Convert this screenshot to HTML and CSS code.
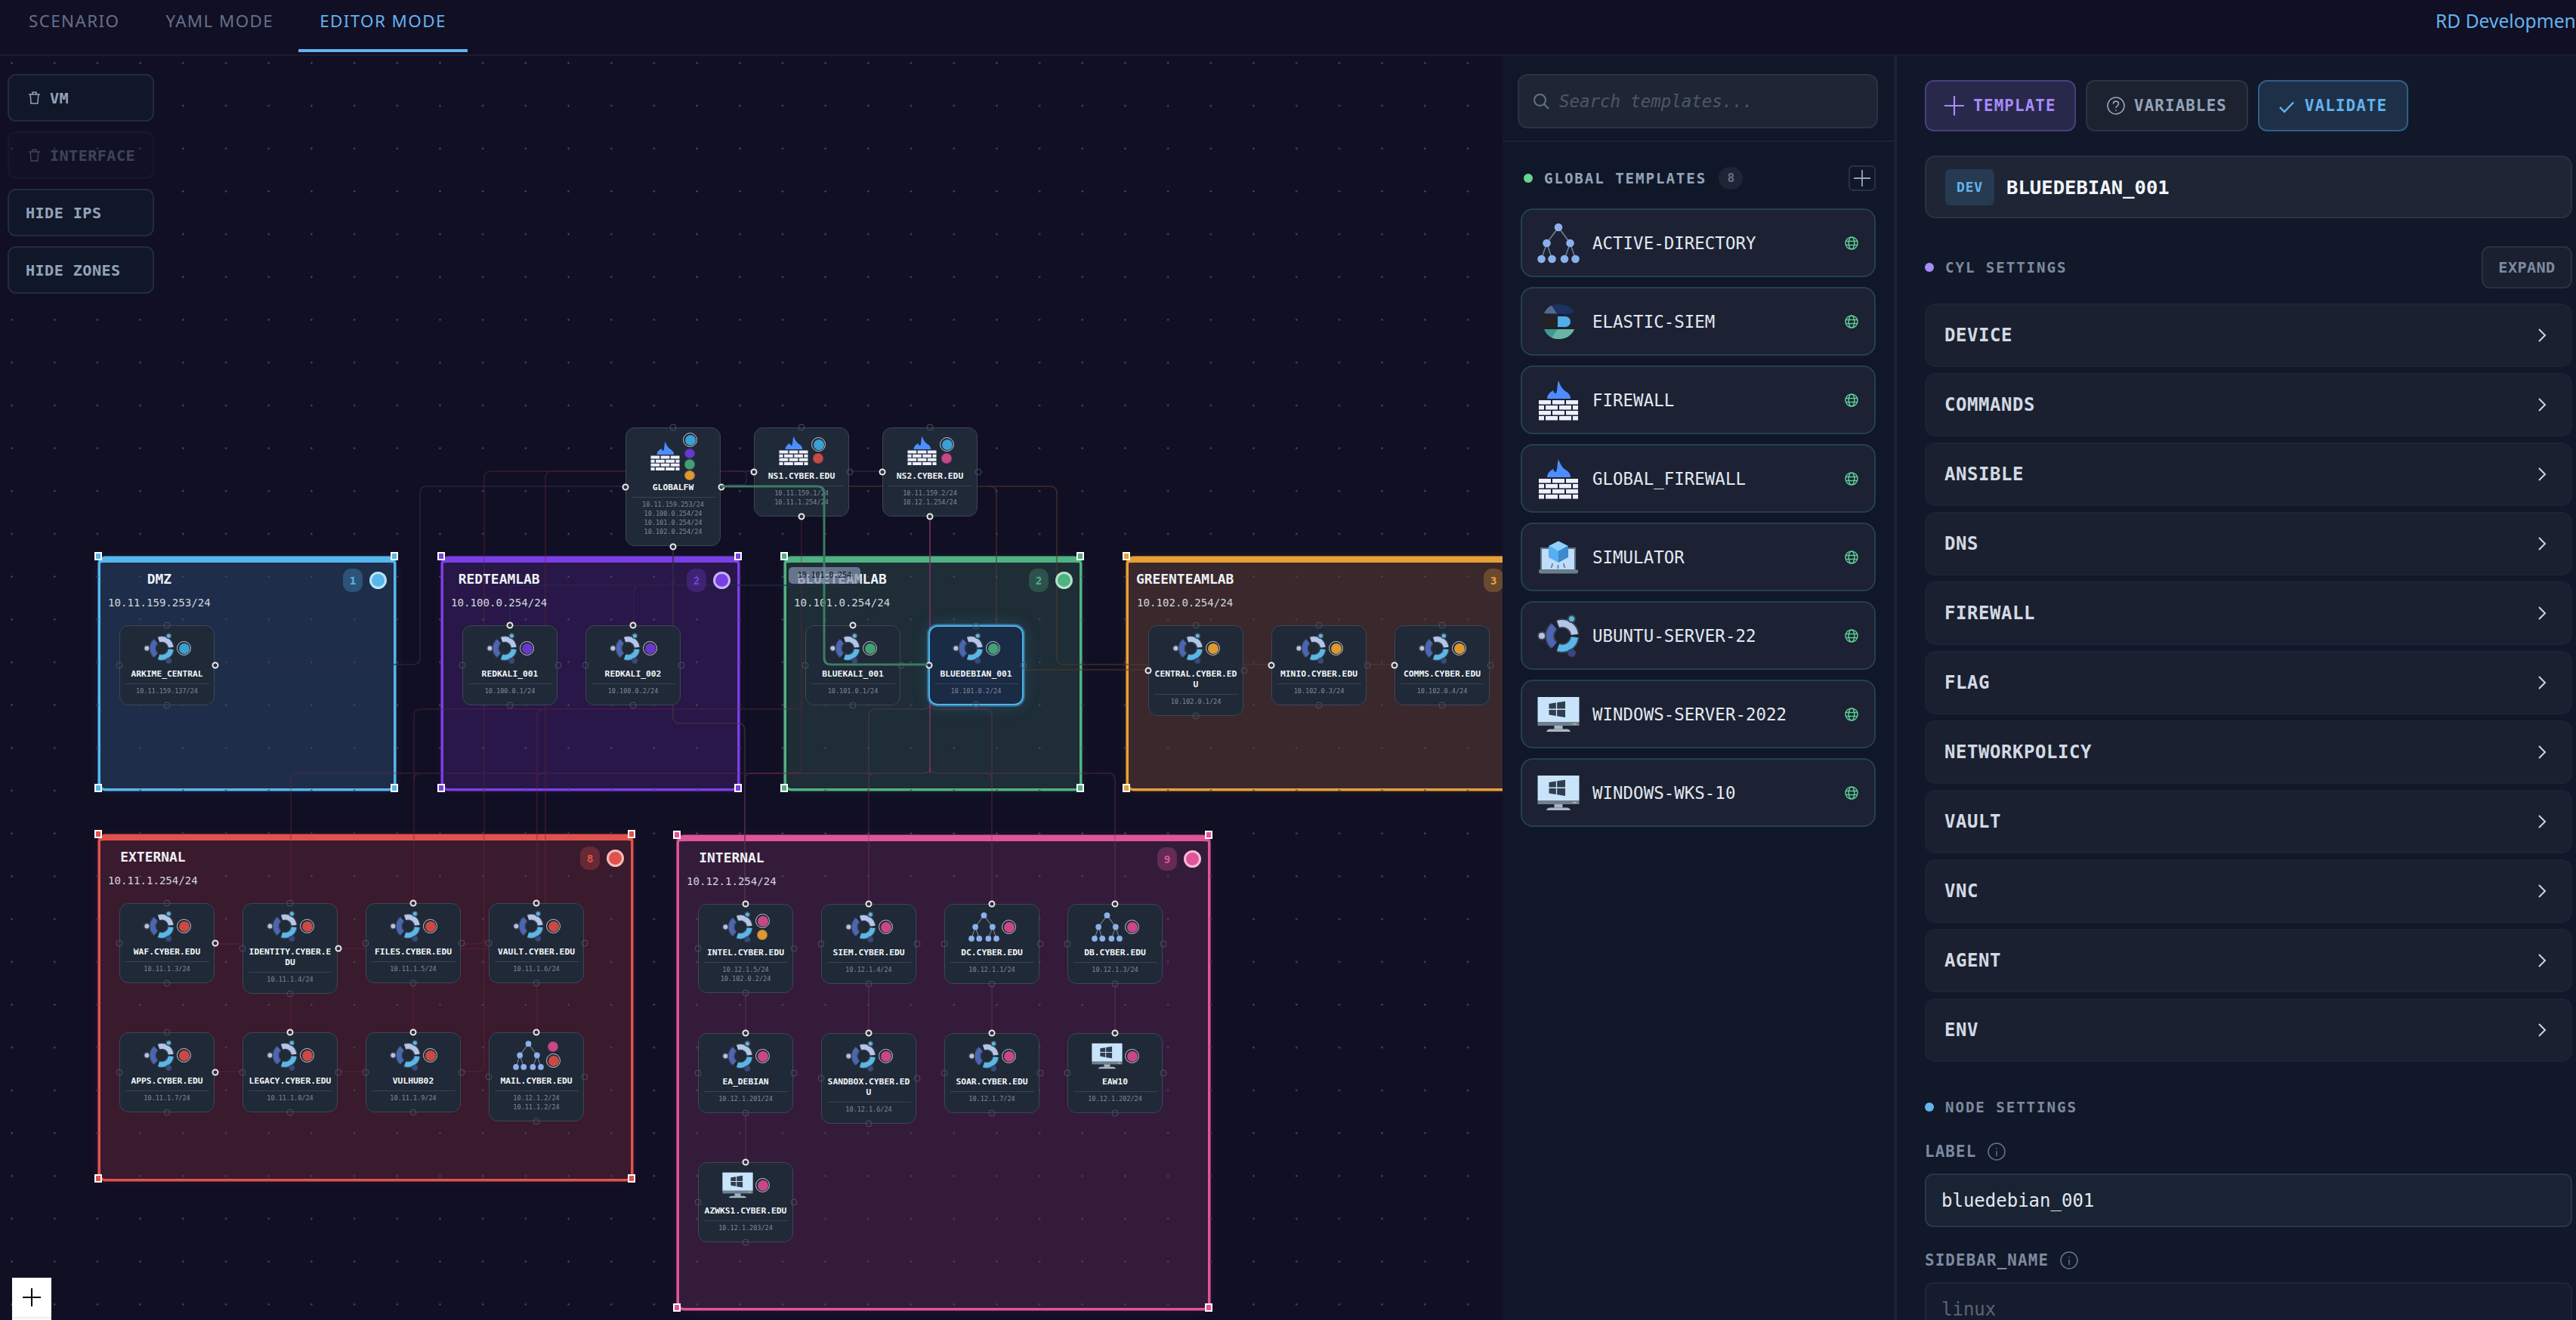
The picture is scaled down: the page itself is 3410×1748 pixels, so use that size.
FILE: index.html
```html
<!DOCTYPE html>
<html lang="en">
<head>
<meta charset="utf-8">
<title>Editor Mode</title>
<link rel="stylesheet" href="styles.css">
</head>
<body>
<svg class="defs" width="0" height="0" aria-hidden="true">
  <symbol id="ubuntu" viewBox="0 0 56 56">
    <g fill="none" stroke="#3f4654" stroke-width="12.500">
      <path d="M22.400 40.600A16.500 16.500 0 0 1 22.400 15.400"/><path d="M27.400 12.500A16.500 16.500 0 0 1 49.400 26.300"/><path d="M49.400 29.700A16.500 16.500 0 0 1 27.400 43.500"/>
    </g>
    <g fill="none" stroke-width="9">
      <path stroke="#4a66b5" d="M22.400 40.600A16.500 16.500 0 0 1 22.400 15.400"/><path stroke="#b3c6ea" d="M27.400 12.500A16.500 16.500 0 0 1 49.400 26.300"/><path stroke="#58b8e8" d="M49.400 29.700A16.500 16.500 0 0 1 27.400 43.500"/>
    </g>
    <g stroke="#3f4654" stroke-width="2">
      <circle cx="6" cy="28" r="5" fill="#b8c2e0"/><circle cx="45.500" cy="5.500" r="4.500" fill="#58b8e0"/><circle cx="45.500" cy="50.500" r="4.500" fill="#2d4aa0"/>
    </g>
  </symbol>
  <symbol id="firewall" viewBox="0 0 56 56">
    <path fill="#4d8dff" d="M13 26C13 20 18 17 21 15C22 18 23 19 25 19C27 14 26 8 28 2C30 8 33 13 37 16C41 18 44 21 44 26Z"/>
    <g fill="#eef0ff">
      <path d="M2 28h16v5.500H2zM20 28h16v5.500H20zM38 28h16v5.500H38z"/>
      <path d="M2 35h7v5.500H2zM11 35h16v5.500H11zM29 35h16v5.500H29zM47 35h7v5.500H47z"/>
      <path d="M2 42h16v5.500H2zM20 42h16v5.500H20zM38 42h16v5.500H38z"/>
      <path d="M2 49h7v5.500H2zM11 49h16v5.500H11zM29 49h16v5.500H29zM47 49h7v5.500H47z"/>
    </g>
  </symbol>
  <symbol id="ad" viewBox="0 0 56 56">
    <g stroke="#7a8698" stroke-width="1.400" fill="none">
      <path d="M28 7L12.500 28M28 7L43.500 28M12.500 28L5.500 49M12.500 28L19.500 49M43.500 28L36 49M43.500 28L50.500 49"/>
    </g>
    <g fill="#8ab0ec">
      <circle cx="28" cy="7" r="5.300"/><circle cx="12.500" cy="28" r="5.300"/><circle cx="43.500" cy="28" r="5.300"/>
      <circle cx="5.500" cy="49" r="5.300"/><circle cx="19.500" cy="49" r="5.300"/><circle cx="36" cy="49" r="5.300"/><circle cx="50.500" cy="49" r="5.300"/>
    </g>
  </symbol>
  <symbol id="elastic" viewBox="0 0 56 56">
    <path fill="#1e3163" d="M9 17C12 9 20 5 28 5C38 5 45 9 49 14C47 16 45 17.500 42 17.500Z"/>
    <path fill="#55698f" d="M9 17C11 12 15 8 19 6.500L26 17.500Z"/>
    <path fill="#232326" d="M9 21H27V35H9Q6 35 6 32V24Q6 21 9 21Z"/>
    <path fill="#52aee8" d="M27 21H37A7 7 0 0 1 37 35H27Z"/>
    <path fill="#3c9a8e" d="M9 38H49C45 47 37 51 28 51C19 51 12 46 9 38Z"/>
    <path fill="#6ab5a8" d="M27 38H49C45 47 37 51 28 51C25 51 22 50 19 49Z"/>
  </symbol>
  <symbol id="simulator" viewBox="0 0 56 56">
    <rect x="5" y="16" width="45" height="29" fill="#c0dcf8" stroke="#5e7280" stroke-width="2"/>
    <path fill="#6a7e8c" d="M2 44.500H54V47Q54 49.500 52 49.500H4Q2 49.500 2 47Z"/>
    <path fill="#8fd0ff" d="M28 6.500L41 13L28 19.500L15 13Z"/>
    <path fill="#55b0f0" d="M15 13L28 19.500V35L15 28Z"/>
    <path fill="#3f88cc" d="M41 13L28 19.500V35L41 28Z"/>
    <path fill="none" stroke="#5e7aa8" stroke-width="1.600" d="M20 36Q20 40 18 42M27.500 38V43M35 36Q35 40 37 42"/>
  </symbol>
  <symbol id="windows" viewBox="0 0 56 56">
    <rect x="0.500" y="5" width="55" height="33" fill="#c8e4fb"/>
    <rect x="0.500" y="38" width="55" height="5" fill="#6f7f90"/>
    <rect x="47" y="40" width="5" height="1.300" fill="#e0c060"/>
    <rect x="22.500" y="43" width="11" height="4.500" fill="#a9b6c3"/>
    <path fill="#a9b6c3" d="M12 51Q13 47.500 17 47.500H39Q43 47.500 44 51Z"/>
    <path fill="#2f3d4d" d="M15.500 14L24.800 12.500V20.500H15.500ZM26.200 12.300L37 10.700V20.500H26.200ZM15.500 22H24.800V30L15.500 28.500ZM26.200 22H37V32L26.200 30.300Z"/>
  </symbol>
  <symbol id="globe" viewBox="0 0 18 18">
    <g fill="none" stroke="#5fcb95" stroke-width="1.500"><circle cx="9" cy="9" r="8"/><ellipse cx="9" cy="9" rx="3.800" ry="8"/><path d="M1.500 6.500H16.500M1.500 11.500H16.500"/></g>
  </symbol>
  <symbol id="trash" viewBox="0 0 15 17">
    <g fill="none" stroke="currentColor" stroke-width="1.500"><path d="M0 4H15M2.200 4L3 16H12L12.800 4M5 4V1.200H10V4"/></g>
  </symbol>
  <symbol id="chev" viewBox="0 0 12 20">
    <path fill="none" stroke="#cbd5e1" stroke-width="2" d="M2 2L10 10L2 18"/>
  </symbol>
  <symbol id="info" viewBox="0 0 24 24">
    <g fill="none" stroke="#64748b" stroke-width="1.500"><circle cx="12" cy="12" r="11"/><path d="M12 11V18M12 7V8.500"/></g>
  </symbol>
  <symbol id="plus" viewBox="0 0 26 26">
    <path fill="none" stroke="currentColor" stroke-width="2.200" d="M13 0V26M0 13H26"/>
  </symbol>
</svg>

<div class="app">
  <header class="topbar">
    <nav class="tabs">
      <a class="tab">SCENARIO</a>
      <a class="tab">YAML MODE</a>
      <a class="tab tab-active">EDITOR MODE</a>
    </nav>
    <span class="org">RD Development</span>
  </header>

  <main class="main">
    <section class="canvas">
      <div class="toolbar">
        <button class="tool"><svg class="tool-ico"><use href="#trash"/></svg>VM</button>
        <button class="tool tool-off"><svg class="tool-ico"><use href="#trash"/></svg>INTERFACE</button>
        <button class="tool">HIDE IPS</button>
        <button class="tool">HIDE ZONES</button>
      </div>

      <!-- zones -->
      <div class="zone z-dmz c-blue">
        <i class="zh tl"></i><i class="zh tr"></i><i class="zh bl"></i><i class="zh br"></i>
        <div class="zhead"><div class="ztitle"><div class="zname">DMZ</div><div class="zip">10.11.159.253/24</div></div><div class="zmeta"><span class="zcount">1</span><span class="zdot"></span></div></div>
        <div class="zgrid">
          <div class="node"><i class="h t"></i><i class="h r on"></i><i class="h b"></i><i class="h l"></i><div class="nhead"><svg class="nicon"><use href="#ubuntu"/></svg><div class="rings"><b class="ring c-blue"></b></div></div><div class="nlabel">ARKIME_CENTRAL</div><div class="nips"><div>10.11.159.137/24</div></div></div>
        </div>
      </div>

      <div class="zone z-red c-purple">
        <i class="zh tl"></i><i class="zh tr"></i><i class="zh bl"></i><i class="zh br"></i>
        <div class="zhead"><div class="ztitle"><div class="zname">REDTEAMLAB</div><div class="zip">10.100.0.254/24</div></div><div class="zmeta"><span class="zcount">2</span><span class="zdot"></span></div></div>
        <div class="zgrid">
          <div class="node"><i class="h t on"></i><i class="h r"></i><i class="h b"></i><i class="h l"></i><div class="nhead"><svg class="nicon"><use href="#ubuntu"/></svg><div class="rings"><b class="ring c-purple"></b></div></div><div class="nlabel">REDKALI_001</div><div class="nips"><div>10.100.0.1/24</div></div></div>
          <div class="node"><i class="h t on"></i><i class="h r"></i><i class="h b"></i><i class="h l"></i><div class="nhead"><svg class="nicon"><use href="#ubuntu"/></svg><div class="rings"><b class="ring c-purple"></b></div></div><div class="nlabel">REDKALI_002</div><div class="nips"><div>10.100.0.2/24</div></div></div>
        </div>
      </div>

      <div class="zone z-blue c-green">
        <i class="zh tl"></i><i class="zh tr"></i><i class="zh bl"></i><i class="zh br"></i>
        <div class="tip">10.101.0.254</div>
        <div class="zhead"><div class="ztitle"><div class="zname">BLUETEAMLAB</div><div class="zip">10.101.0.254/24</div></div><div class="zmeta"><span class="zcount">2</span><span class="zdot"></span></div></div>
        <div class="zgrid">
          <div class="node"><i class="h t on"></i><i class="h r"></i><i class="h b"></i><i class="h l"></i><div class="nhead"><svg class="nicon"><use href="#ubuntu"/></svg><div class="rings"><b class="ring c-green"></b></div></div><div class="nlabel">BLUEKALI_001</div><div class="nips"><div>10.101.0.1/24</div></div></div>
          <div class="node node-sel"><i class="h t"></i><i class="h r"></i><i class="h b"></i><i class="h l on"></i><div class="nhead"><svg class="nicon"><use href="#ubuntu"/></svg><div class="rings"><b class="ring c-green"></b></div></div><div class="nlabel">BLUEDEBIAN_001</div><div class="nips"><div>10.101.0.2/24</div></div></div>
        </div>
      </div>

      <div class="zone z-green c-orange">
        <i class="zh tl"></i><i class="zh bl"></i>
        <div class="zhead"><div class="ztitle"><div class="zname">GREENTEAMLAB</div><div class="zip">10.102.0.254/24</div></div><div class="zmeta"><span class="zcount">3</span><span class="zdot"></span></div></div>
        <div class="zgrid">
          <div class="node"><i class="h t"></i><i class="h r"></i><i class="h b"></i><i class="h l on"></i><div class="nhead"><svg class="nicon"><use href="#ubuntu"/></svg><div class="rings"><b class="ring c-orange"></b></div></div><div class="nlabel">CENTRAL.CYBER.EDU</div><div class="nips"><div>10.102.0.1/24</div></div></div>
          <div class="node"><i class="h t"></i><i class="h r"></i><i class="h b"></i><i class="h l on"></i><div class="nhead"><svg class="nicon"><use href="#ubuntu"/></svg><div class="rings"><b class="ring c-orange"></b></div></div><div class="nlabel">MINIO.CYBER.EDU</div><div class="nips"><div>10.102.0.3/24</div></div></div>
          <div class="node"><i class="h t"></i><i class="h r"></i><i class="h b"></i><i class="h l on"></i><div class="nhead"><svg class="nicon"><use href="#ubuntu"/></svg><div class="rings"><b class="ring c-orange"></b></div></div><div class="nlabel">COMMS.CYBER.EDU</div><div class="nips"><div>10.102.0.4/24</div></div></div>
        </div>
      </div>

      <div class="zone z-ext c-red">
        <i class="zh tl"></i><i class="zh tr"></i><i class="zh bl"></i><i class="zh br"></i>
        <div class="zhead"><div class="ztitle"><div class="zname">EXTERNAL</div><div class="zip">10.11.1.254/24</div></div><div class="zmeta"><span class="zcount">8</span><span class="zdot"></span></div></div>
        <div class="zgrid">
          <div class="node"><i class="h t"></i><i class="h r on"></i><i class="h b"></i><i class="h l"></i><div class="nhead"><svg class="nicon"><use href="#ubuntu"/></svg><div class="rings"><b class="ring c-red"></b></div></div><div class="nlabel">WAF.CYBER.EDU</div><div class="nips"><div>10.11.1.3/24</div></div></div>
          <div class="node"><i class="h t"></i><i class="h r on"></i><i class="h b"></i><i class="h l"></i><div class="nhead"><svg class="nicon"><use href="#ubuntu"/></svg><div class="rings"><b class="ring c-red"></b></div></div><div class="nlabel">IDENTITY.CYBER.EDU</div><div class="nips"><div>10.11.1.4/24</div></div></div>
          <div class="node"><i class="h t on"></i><i class="h r"></i><i class="h b"></i><i class="h l"></i><div class="nhead"><svg class="nicon"><use href="#ubuntu"/></svg><div class="rings"><b class="ring c-red"></b></div></div><div class="nlabel">FILES.CYBER.EDU</div><div class="nips"><div>10.11.1.5/24</div></div></div>
          <div class="node"><i class="h t on"></i><i class="h r"></i><i class="h b"></i><i class="h l"></i><div class="nhead"><svg class="nicon"><use href="#ubuntu"/></svg><div class="rings"><b class="ring c-red"></b></div></div><div class="nlabel">VAULT.CYBER.EDU</div><div class="nips"><div>10.11.1.6/24</div></div></div>
          <div class="node"><i class="h t"></i><i class="h r on"></i><i class="h b"></i><i class="h l"></i><div class="nhead"><svg class="nicon"><use href="#ubuntu"/></svg><div class="rings"><b class="ring c-red"></b></div></div><div class="nlabel">APPS.CYBER.EDU</div><div class="nips"><div>10.11.1.7/24</div></div></div>
          <div class="node"><i class="h t on"></i><i class="h r"></i><i class="h b"></i><i class="h l"></i><div class="nhead"><svg class="nicon"><use href="#ubuntu"/></svg><div class="rings"><b class="ring c-red"></b></div></div><div class="nlabel">LEGACY.CYBER.EDU</div><div class="nips"><div>10.11.1.8/24</div></div></div>
          <div class="node"><i class="h t on"></i><i class="h r"></i><i class="h b"></i><i class="h l"></i><div class="nhead"><svg class="nicon"><use href="#ubuntu"/></svg><div class="rings"><b class="ring c-red"></b></div></div><div class="nlabel">VULHUB02</div><div class="nips"><div>10.11.1.9/24</div></div></div>
          <div class="node"><i class="h t on"></i><i class="h r"></i><i class="h b"></i><i class="h l"></i><div class="nhead"><svg class="nicon"><use href="#ad"/></svg><div class="rings"><b class="pip c-pink"></b><b class="ring c-red"></b></div></div><div class="nlabel">MAIL.CYBER.EDU</div><div class="nips"><div>10.12.1.2/24</div><div>10.11.1.2/24</div></div></div>
        </div>
      </div>

      <div class="zone z-int c-pink">
        <i class="zh tl"></i><i class="zh tr"></i><i class="zh bl"></i><i class="zh br"></i>
        <div class="zhead"><div class="ztitle"><div class="zname">INTERNAL</div><div class="zip">10.12.1.254/24</div></div><div class="zmeta"><span class="zcount">9</span><span class="zdot"></span></div></div>
        <div class="zgrid">
          <div class="node"><i class="h t on"></i><i class="h r"></i><i class="h b"></i><i class="h l"></i><div class="nhead"><svg class="nicon"><use href="#ubuntu"/></svg><div class="rings"><b class="ring c-pink"></b><b class="pip c-orange"></b></div></div><div class="nlabel">INTEL.CYBER.EDU</div><div class="nips"><div>10.12.1.5/24</div><div>10.102.0.2/24</div></div></div>
          <div class="node"><i class="h t on"></i><i class="h r"></i><i class="h b"></i><i class="h l"></i><div class="nhead"><svg class="nicon"><use href="#ubuntu"/></svg><div class="rings"><b class="ring c-pink"></b></div></div><div class="nlabel">SIEM.CYBER.EDU</div><div class="nips"><div>10.12.1.4/24</div></div></div>
          <div class="node"><i class="h t on"></i><i class="h r"></i><i class="h b"></i><i class="h l"></i><div class="nhead"><svg class="nicon"><use href="#ad"/></svg><div class="rings"><b class="ring c-pink"></b></div></div><div class="nlabel">DC.CYBER.EDU</div><div class="nips"><div>10.12.1.1/24</div></div></div>
          <div class="node"><i class="h t on"></i><i class="h r"></i><i class="h b"></i><i class="h l"></i><div class="nhead"><svg class="nicon"><use href="#ad"/></svg><div class="rings"><b class="ring c-pink"></b></div></div><div class="nlabel">DB.CYBER.EDU</div><div class="nips"><div>10.12.1.3/24</div></div></div>
          <div class="node"><i class="h t on"></i><i class="h r"></i><i class="h b"></i><i class="h l"></i><div class="nhead"><svg class="nicon"><use href="#ubuntu"/></svg><div class="rings"><b class="ring c-pink"></b></div></div><div class="nlabel">EA_DEBIAN</div><div class="nips"><div>10.12.1.201/24</div></div></div>
          <div class="node"><i class="h t on"></i><i class="h r"></i><i class="h b"></i><i class="h l"></i><div class="nhead"><svg class="nicon"><use href="#ubuntu"/></svg><div class="rings"><b class="ring c-pink"></b></div></div><div class="nlabel">SANDBOX.CYBER.EDU</div><div class="nips"><div>10.12.1.6/24</div></div></div>
          <div class="node"><i class="h t on"></i><i class="h r"></i><i class="h b"></i><i class="h l"></i><div class="nhead"><svg class="nicon"><use href="#ubuntu"/></svg><div class="rings"><b class="ring c-pink"></b></div></div><div class="nlabel">SOAR.CYBER.EDU</div><div class="nips"><div>10.12.1.7/24</div></div></div>
          <div class="node"><i class="h t on"></i><i class="h r"></i><i class="h b"></i><i class="h l"></i><div class="nhead"><svg class="nicon"><use href="#windows"/></svg><div class="rings"><b class="ring c-pink"></b></div></div><div class="nlabel">EAW10</div><div class="nips"><div>10.12.1.202/24</div></div></div>
          <div class="node"><i class="h t on"></i><i class="h r"></i><i class="h b"></i><i class="h l"></i><div class="nhead"><svg class="nicon"><use href="#windows"/></svg><div class="rings"><b class="ring c-pink"></b></div></div><div class="nlabel">AZWKS1.CYBER.EDU</div><div class="nips"><div>10.12.1.203/24</div></div></div>
        </div>
      </div>

      <div class="dots"></div>

      <svg class="edges" viewBox="0 74 1989 1674">
        <g class="e-red">
          <path d="M998 624H650Q641 624 641 633V1241Q641 1250 632 1250H611"/>
          <path d="M641 1241V1410Q641 1419 632 1419H611"/>
          <path d="M998 624H731Q722 624 722 633V1197"/>
          <path d="M1061 683V930Q1061 939 1052 939H557Q548 939 548 948V1197"/>
          <path d="M720 939Q711 939 711 948V1197"/>
          <path d="M1061 930V1015Q1061 1024 1052 1024H394Q385 1024 385 1033V1197"/>
          <path d="M720 1024Q711 1024 711 1033M557 1024Q548 1024 548 1033"/>
          <path d="M284 1250H321M447 1256H648M284 1419H321M447 1419H484M385 1316V1367M547 1302V1367M711 1302V1367"/>
        </g>
        <g class="e-pink">
          <path d="M1231 930Q1231 939 1222 939H1159Q1150 939 1150 948V1197"/>
          <path d="M1231 930Q1231 939 1240 939H1304Q1313 939 1313 948V1197"/>
          <path d="M1231 1015Q1231 1024 1222 1024H995Q986 1024 986 1033V1197"/>
          <path d="M1231 1015Q1231 1024 1240 1024H1467Q1476 1024 1476 1033V1197"/>
          <path d="M1159 1024Q1150 1024 1150 1033M1304 1024Q1313 1024 1313 1033"/>
          <path d="M987 1314V1368M1150 1302V1368M1313 1302V1368M1476 1302V1368M987 1473V1539"/>
        </g>
        <path class="e-trunk" d="M1231 683V1024"/>
        <path class="e-mauve" d="M891 721V949Q891 958 900 958H977Q986 958 986 967V1197"/>
        <g class="e-blue">
          <path d="M284 880H547Q556 880 556 871V653Q556 644 565 644H828"/>
          <path d="M891 721V766Q891 775 882 775H848Q839 775 839 784V828"/>
          <path d="M848 775H684Q675 775 675 784V828"/>
          <path d="M891 766Q891 775 900 775H1119Q1128 775 1128 784V828"/>
          <path d="M1125 624H1168"/>
          <path d="M965 624H982Q988 624 988 630V636Q988 642 982 642H965"/>
        </g>
        <g class="e-brown">
          <path d="M954 644H1390Q1399 644 1399 653V871Q1399 880 1408 880H1846"/>
          <path d="M1310 644Q1319 644 1319 653V828"/>
          <path d="M1355 887H1520"/>
        </g>
      </svg>
      <svg class="edges edges-top" viewBox="0 74 1989 1674">
        <path class="e-green" d="M954 644H1082Q1091 644 1091 653V871Q1091 880 1100 880H1228"/>
      </svg>

      <!-- nodes outside zones -->
      <div class="node gn g-fw"><i class="h t"></i><i class="h r on"></i><i class="h b on"></i><i class="h l on"></i><div class="nhead"><svg class="nicon"><use href="#firewall"/></svg><div class="rings"><b class="ring c-blue"></b><b class="pip c-purple"></b><b class="pip c-green"></b><b class="pip c-orange"></b></div></div><div class="nlabel">GLOBALFW</div><div class="nips"><div>10.11.159.253/24</div><div>10.100.0.254/24</div><div>10.101.0.254/24</div><div>10.102.0.254/24</div></div></div>
      <div class="node gn g-ns1"><i class="h t"></i><i class="h r"></i><i class="h b on"></i><i class="h l on"></i><div class="nhead"><svg class="nicon"><use href="#firewall"/></svg><div class="rings"><b class="ring c-blue"></b><b class="pip c-red"></b></div></div><div class="nlabel">NS1.CYBER.EDU</div><div class="nips"><div>10.11.159.1/24</div><div>10.11.1.254/24</div></div></div>
      <div class="node gn g-ns2"><i class="h t"></i><i class="h r"></i><i class="h b on"></i><i class="h l on"></i><div class="nhead"><svg class="nicon"><use href="#firewall"/></svg><div class="rings"><b class="ring c-blue"></b><b class="pip c-pink"></b></div></div><div class="nlabel">NS2.CYBER.EDU</div><div class="nips"><div>10.11.159.2/24</div><div>10.12.1.254/24</div></div></div>

      <button class="zoomctl"><svg class="zoomctl-ico"><use href="#plus"/></svg></button>
    </section>

    <aside class="templates">
      <div class="search-wrap">
        <div class="search">
          <svg class="search-ico" viewBox="0 0 22 22"><g fill="none" stroke="#64748b" stroke-width="2"><circle cx="9.500" cy="9.500" r="7.500"/><path d="M15 15L21 21"/></g></svg>
          <span class="search-ph">Search templates...</span>
        </div>
      </div>
      <div class="tpl-head">
        <span class="dot dot-green"></span>
        <span class="sect-title">GLOBAL TEMPLATES</span>
        <span class="tpl-count">8</span>
        <button class="tpl-add"><svg class="tpl-add-ico"><use href="#plus"/></svg></button>
      </div>
      <div class="tpl-list">
        <div class="tpl"><svg class="tpl-ico"><use href="#ad"/></svg><span class="tpl-name">ACTIVE-DIRECTORY</span><svg class="tpl-globe"><use href="#globe"/></svg></div>
        <div class="tpl"><svg class="tpl-ico"><use href="#elastic"/></svg><span class="tpl-name">ELASTIC-SIEM</span><svg class="tpl-globe"><use href="#globe"/></svg></div>
        <div class="tpl"><svg class="tpl-ico"><use href="#firewall"/></svg><span class="tpl-name">FIREWALL</span><svg class="tpl-globe"><use href="#globe"/></svg></div>
        <div class="tpl"><svg class="tpl-ico"><use href="#firewall"/></svg><span class="tpl-name">GLOBAL_FIREWALL</span><svg class="tpl-globe"><use href="#globe"/></svg></div>
        <div class="tpl"><svg class="tpl-ico"><use href="#simulator"/></svg><span class="tpl-name">SIMULATOR</span><svg class="tpl-globe"><use href="#globe"/></svg></div>
        <div class="tpl"><svg class="tpl-ico"><use href="#ubuntu"/></svg><span class="tpl-name">UBUNTU-SERVER-22</span><svg class="tpl-globe"><use href="#globe"/></svg></div>
        <div class="tpl"><svg class="tpl-ico"><use href="#windows"/></svg><span class="tpl-name">WINDOWS-SERVER-2022</span><svg class="tpl-globe"><use href="#globe"/></svg></div>
        <div class="tpl"><svg class="tpl-ico"><use href="#windows"/></svg><span class="tpl-name">WINDOWS-WKS-10</span><svg class="tpl-globe"><use href="#globe"/></svg></div>
      </div>
    </aside>

    <aside class="inspector">
      <div class="actions">
        <button class="act act-purple"><svg class="act-plus"><use href="#plus"/></svg>TEMPLATE</button>
        <button class="act act-grey"><svg class="act-ico" viewBox="0 0 24 24"><g fill="none" stroke="currentColor" stroke-width="1.600"><circle cx="12" cy="12" r="11"/><path d="M8.500 9.500C8.500 5 15.500 5 15.500 9.500C15.500 12 12 12.500 12 15M12 17.500V19"/></g></svg>VARIABLES</button>
        <button class="act act-blue"><svg class="act-check" viewBox="0 0 20 16"><path fill="none" stroke="currentColor" stroke-width="2.400" d="M1 8L7 14L19 1.500"/></svg>VALIDATE</button>
      </div>
      <div class="devhead"><span class="devtag">DEV</span><span class="devname">BLUEDEBIAN_001</span></div>
      <div class="sect sect-cyl">
        <span class="dot dot-purple"></span><span class="sect-title sect-dim">CYL SETTINGS</span>
        <button class="expand">EXPAND</button>
      </div>
      <div class="rows">
        <div class="row"><span>DEVICE</span><svg class="chev"><use href="#chev"/></svg></div>
        <div class="row"><span>COMMANDS</span><svg class="chev"><use href="#chev"/></svg></div>
        <div class="row"><span>ANSIBLE</span><svg class="chev"><use href="#chev"/></svg></div>
        <div class="row"><span>DNS</span><svg class="chev"><use href="#chev"/></svg></div>
        <div class="row"><span>FIREWALL</span><svg class="chev"><use href="#chev"/></svg></div>
        <div class="row"><span>FLAG</span><svg class="chev"><use href="#chev"/></svg></div>
        <div class="row"><span>NETWORKPOLICY</span><svg class="chev"><use href="#chev"/></svg></div>
        <div class="row"><span>VAULT</span><svg class="chev"><use href="#chev"/></svg></div>
        <div class="row"><span>VNC</span><svg class="chev"><use href="#chev"/></svg></div>
        <div class="row"><span>AGENT</span><svg class="chev"><use href="#chev"/></svg></div>
        <div class="row"><span>ENV</span><svg class="chev"><use href="#chev"/></svg></div>
      </div>
      <div class="sect sect-node">
        <span class="dot dot-sky"></span><span class="sect-title sect-dim">NODE SETTINGS</span>
      </div>
      <div class="field-label">LABEL<svg class="info"><use href="#info"/></svg></div>
      <div class="field">bluedebian_001</div>
      <div class="field-label field-label-2">SIDEBAR_NAME<svg class="info"><use href="#info"/></svg></div>
      <div class="field field-ph">linux</div>
    </aside>
  </main>
</div>
</body>
</html>
```
FILE: styles.css
```css
* { box-sizing: border-box; }
html, body { margin: 0; height: 100%; }
body { background: #110f24; overflow: hidden; font-family: "DejaVu Sans Mono", monospace; }
button { font-family: inherit; cursor: pointer; }
.defs { position: absolute; }

.app { display: flex; flex-direction: column; width: 3410px; height: 1748px; overflow: hidden; }

/* top bar */
.topbar { flex: none; height: 74px; display: flex; justify-content: space-between; background: #110f24; border-bottom: 2px solid #1d1a2e; padding-left: 10px; }
.tabs { display: flex; gap: 5px; }
.tab { height: 69px; padding: 12px 28px 0; font: 400 22.400px/32px "Noto Sans", sans-serif; letter-spacing: 1.400px; color: #64708a; }
.tab-active { color: #63b3ed; border-bottom: 4px solid #63b3ed; }
.org { flex: none; width: 186px; white-space: nowrap; overflow: hidden; padding-top: 12px; font: 400 24.600px/32px "Noto Sans", sans-serif; color: #63b3ed; }

.main { flex: 1; display: flex; min-height: 0; }

/* canvas */
.canvas { position: relative; z-index: 0; flex: none; width: 1989px; overflow: hidden; background: #110f24; }
.dots { position: absolute; inset: 0; z-index: 1; pointer-events: none;
  background-image: radial-gradient(circle, #4c4a60 0, #413f55 1px, transparent 1.500px);
  background-size: 56.700px 56.700px; background-position: -12.750px -19px; }
.edges { position: absolute; left: 0; top: 0; width: 1989px; height: 1674px; z-index: 2; pointer-events: none; fill: none; }
.edges-top { z-index: 4; }
.e-red { stroke: #6e2a3c; stroke-width: 1.500; opacity: .42; }
.e-pink { stroke: #7c3468; stroke-width: 1.500; opacity: .42; }
.e-trunk { stroke: #7c3468; stroke-width: 1.500; }
.e-mauve { stroke: #4e3346; stroke-width: 1.500; opacity: .7; }
.e-blue { stroke: #272b50; stroke-width: 1.500; opacity: .8; }
.e-brown { stroke: #533a2e; stroke-width: 1.500; opacity: .7; }
.e-green { stroke: #3b7d60; stroke-width: 3px; }

.toolbar { position: absolute; z-index: 3; left: 10px; top: 24px; display: flex; flex-direction: column; gap: 13px; }
.tool { display: flex; align-items: center; width: 194px; height: 63px; padding: 0 0 0 22px; background: #0f1729; border: 2px solid #232b3d; border-radius: 11px; color: #94a3b8; font-size: 20.200px; font-weight: 700; letter-spacing: .4px; white-space: nowrap; }
.tool-off { opacity: .35; }
.tool-ico { width: 15px; height: 17px; margin: 0 13px 0 4px; flex: none; }

.zoomctl { position: absolute; z-index: 6; left: 16px; bottom: -4px; width: 52px; height: 60px; padding: 14px 0 0; background: #fff; border: 0; color: #000; display: flex; justify-content: center; }
.zoomctl::after { content: ""; position: absolute; left: 0; right: 0; top: 52px; height: 2px; background: #eee; }
.zoomctl-ico { width: 24px; height: 24px; }

/* colour tokens */
.c-blue { --c: #55b7ec; --cf: #3c9fd6; --cl: #bde3f8; }
.c-purple { --c: #7a3fe4; --cf: #6a36cc; --cl: #c9b2f3; }
.c-green { --c: #4fb282; --cf: #459f74; --cl: #b6e3cd; }
.c-orange { --c: #e8a035; --cf: #dd9832; --cl: #f5d7a6; }
.c-red { --c: #e0524c; --cf: #c94a45; --cl: #f5bdb9; }
.c-pink { --c: #e0559a; --cf: #c8478a; --cl: #f5bcd8; }

/* zones */
.zone { position: absolute; border: 3px solid var(--c); border-top-width: 8px; border-radius: 9px; box-shadow: 0 0 0 1px color-mix(in srgb, var(--c) 55%, transparent), 0 0 14px color-mix(in srgb, var(--c) 10%, transparent); }
.z-dmz { left: 130px; top: 663px; width: 394px; height: 310px; background: #1e2d4a; }
.z-red { left: 584px; top: 663px; width: 395px; height: 310px; background: #281748; }
.z-blue { left: 1038px; top: 663px; width: 394px; height: 310px; background: #1e2d36; }
.z-green { left: 1491px; top: 663px; width: 543px; height: 310px; background: #3a282c; }
.z-ext { left: 130px; top: 1031px; width: 708px; height: 459px; background: #3a1a2d; }
.z-int { left: 896px; top: 1032px; width: 706px; height: 629px; background: #351b3a; }
.zh { position: absolute; z-index: 5; width: 10px; height: 11px; background: var(--c); border: 2px solid #fff; }
.zh.tl { left: -8px; top: -14px; }
.zh.tr { right: -6px; top: -14px; }
.zh.bl { left: -8px; bottom: -5px; }
.zh.br { right: -6px; bottom: -5px; }
.zhead { position: relative; z-index: 3; display: flex; justify-content: space-between; align-items: flex-start; padding: 11px 9px 0 10px; }
.ztitle { display: flex; flex-direction: column; align-items: center; }
.zname { font-size: 17.900px; line-height: 22px; font-weight: 700; color: #eef1f6; }
.zip { margin-top: 10px; font-size: 14.100px; line-height: 20px; font-weight: 500; color: #d0d5dd; }
.zmeta { display: flex; align-items: center; gap: 9px; margin-top: -3px; }
.zcount { width: 26px; height: 31px; border-radius: 11px; display: flex; align-items: center; justify-content: center; font-size: 14.400px; font-weight: 700; color: var(--c); background: color-mix(in srgb, var(--c) 28%, transparent); }
.zdot { width: 23px; height: 23px; border-radius: 50%; background: var(--c); border: 3px solid var(--cl); }
.zgrid { display: grid; grid-template-columns: repeat(auto-fill, 126px); grid-auto-rows: 134px; column-gap: 37px; row-gap: 37px; align-items: start; margin: 20px 0 0 25px; }
.z-green .zgrid { margin-left: 26px; }

/* nodes */
.node { position: relative; z-index: 3; width: 126px; padding: 5.500px 6.500px 12px; background: #1f2937; border: 1.500px solid #3e4656; border-radius: 12px; text-align: center; }
.node-sel { background: #1a2b45; border: 2.500px solid #4db5ee; padding: 4.500px 5.500px 11px; box-shadow: 0 0 0 2px rgba(77,181,238,.4), 0 0 22px rgba(77,181,238,.2); }
.gn { position: absolute; }
.g-fw { left: 828px; top: 492px; }
.g-ns1 { left: 998px; top: 492px; }
.g-ns2 { left: 1168px; top: 492px; }
.h { position: absolute; z-index: 4; width: 9px; height: 9px; border-radius: 50%; border: 1.500px solid #4a5161; }
.h.on { background: #2a2f38; border: 2px solid #e8e8e8; }
.h.t { left: 50%; top: 0; transform: translate(-50%, -50%); margin-top: -1.500px; }
.h.b { left: 50%; bottom: 0; transform: translate(-50%, 50%); margin-bottom: -1.500px; }
.h.l { left: 0; top: 50%; transform: translate(-50%, -50%); margin-left: -1.500px; }
.h.r { right: 0; top: 50%; transform: translate(50%, -50%); margin-right: -1.500px; }
.nhead { display: flex; justify-content: center; align-items: center; gap: 3px; min-height: 47px; }
.nicon { width: 41px; height: 41px; flex: none; }
.rings { display: flex; flex-direction: column; align-items: center; gap: 3px; }
.ring { display: block; width: 19px; height: 19px; border-radius: 50%; border: 1.300px solid #c4c8ce; padding: 1.500px; background: var(--cf) content-box; }
.pip { display: block; width: 11.500px; height: 11.500px; border-radius: 50%; background: var(--cf); box-shadow: 0 0 0 1px color-mix(in srgb, var(--cf) 70%, transparent); }
.nlabel { margin-top: 4px; font-size: 11.300px; line-height: 14px; font-weight: 700; color: #f1f5f9; word-break: break-all; }
.nips { margin-top: 5px; padding-top: 3px; border-top: 1px solid #384252; font-size: 8.500px; line-height: 12px; color: #7f8a9a; }

/* tooltip */
.tip { position: absolute; z-index: 5; left: 3px; top: 6px; width: 95px; height: 22px; border-radius: 5px; background: rgba(130,146,172,.72); color: #0b0f1a; font-size: 9.900px; line-height: 22px; text-align: center; }

/* template panel */
.templates { flex: none; width: 522px; background: #0f1729; border-right: 4px solid #1a2234; }
.search-wrap { padding: 24px 21px 16px 20px; border-bottom: 2px solid #1a2234; }
.search { display: flex; align-items: center; height: 72px; background: #1e2534; border: 2px solid #2a3142; border-radius: 13px; padding-left: 18px; }
.search-ico { width: 22px; height: 22px; margin-right: 13px; flex: none; }
.search-ph { font-size: 22.400px; font-style: italic; color: #4e5768; }
.tpl-head { display: flex; align-items: center; height: 88px; padding: 8px 24px 0 28px; }
.dot { flex: none; width: 12px; height: 12px; border-radius: 50%; }
.dot-green { background: #68d391; }
.dot-purple { background: #a78bfa; }
.dot-sky { background: #63b3ed; }
.sect-title { margin-left: 15px; font-size: 19.200px; font-weight: 700; letter-spacing: 1.900px; color: #94a3b8; white-space: nowrap; }
.tpl-count { margin-left: 16px; width: 32px; height: 30px; border-radius: 15px; background: #1e2534; color: #64708a; font-size: 16px; font-weight: 700; text-align: center; line-height: 30px; }
.tpl-add { margin-left: auto; display: flex; align-items: center; justify-content: center; width: 36px; height: 34px; padding: 0; background: transparent; border: 2px solid #2a3142; border-radius: 6px; color: #94a3b8; }
.tpl-add-ico { width: 22px; height: 22px; }
.tpl-list { display: flex; flex-direction: column; gap: 13px; padding: 0 24px; }
.tpl { display: flex; align-items: center; height: 91px; padding: 0 21px 0 20px; background: #1c2233; border: 2px solid #25404a; border-radius: 16px; }
.tpl-ico { width: 56px; height: 56px; flex: none; margin-right: 17px; }
.tpl-name { flex: 1; font-size: 22.400px; color: #e2e8f0; letter-spacing: .05px; }
.tpl-globe { width: 18px; height: 18px; flex: none; }

/* inspector */
.inspector { flex: 1; min-width: 0; background: #111829; padding: 32px 5px 0 37px; overflow: hidden; }
.actions { display: flex; gap: 13px; }
.act { display: flex; align-items: center; justify-content: center; height: 68px; padding: 0; border-radius: 12px; border: 2px solid; font-size: 20.800px; font-weight: 700; letter-spacing: 1.150px; }
.act-purple { width: 200px; color: #a78bfa; background: #28284a; border-color: #4a3f7a; }
.act-grey { width: 215px; color: #94a3b8; background: #1c2230; border-color: #2c3344; }
.act-blue { width: 199px; color: #63b3ed; background: #1e3048; border-color: #2f5f85; }
.act-plus { width: 26px; height: 26px; margin-right: 12px; }
.act-ico { width: 24px; height: 24px; margin-right: 12px; }
.act-check { width: 20px; height: 16px; margin-right: 14px; margin-top: 4px; }
.devhead { display: flex; align-items: center; height: 83px; margin-top: 32px; padding-left: 25px; background: #1e2534; border: 2px solid #2a3142; border-radius: 14px; }
.devtag { display: flex; align-items: center; justify-content: center; width: 65px; height: 48px; border-radius: 7px; background: #263a52; color: #63b3ed; font-size: 18px; font-weight: 700; letter-spacing: .9px; }
.devname { margin-left: 16px; font-size: 25.600px; font-weight: 700; color: #f1f5f9; }
.sect { display: flex; align-items: center; }
.sect-cyl { height: 56px; margin-top: 37px; }
.sect-dim { color: #7d8aa0; }
.expand { margin-left: auto; width: 120px; height: 56px; padding: 0; background: #1a2030; border: 2px solid #2a3142; border-radius: 11px; color: #7d8aa0; font-size: 20.200px; font-weight: 700; letter-spacing: .4px; }
.rows { display: flex; flex-direction: column; gap: 8px; margin-top: 20px; }
.row { display: flex; align-items: center; justify-content: space-between; height: 84px; padding: 0 32px 0 24px; background: #1a2030; border: 2px solid #1c2336; border-radius: 14px; font-size: 24px; font-weight: 700; letter-spacing: .55px; color: #d3d9e3; }
.chev { width: 12px; height: 20px; }
.sect-node { height: 24px; margin-top: 48px; }
.field-label { display: flex; align-items: center; gap: 15px; margin-top: 35px; height: 24px; font-size: 20.800px; font-weight: 700; letter-spacing: 1.150px; color: #7d8aa0; }
.field-label-2 { margin-top: 32px; }
.info { width: 24px; height: 24px; flex: none; }
.field { display: flex; align-items: center; height: 71px; margin-top: 17px; padding-left: 20px; background: #1a2333; border: 2px solid #2a3548; border-radius: 11px; font-size: 24px; color: #e2e8f0; }
.field-ph { background: #151c2d; border-color: #1e2638; color: #5a6473; }
```
